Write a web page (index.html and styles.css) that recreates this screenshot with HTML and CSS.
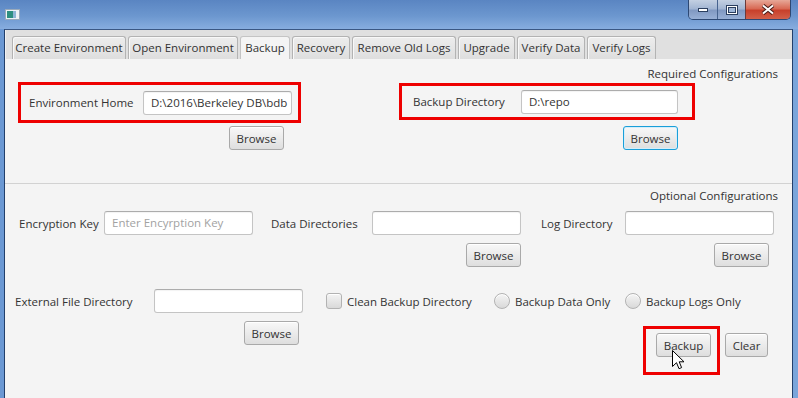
FILE: index.html
```html
<!DOCTYPE html>
<html lang="en">
<head>
  <meta charset="UTF-8" />
  <title>Backup</title>
  <link rel="stylesheet" href="styles.css">
</head>
<body>
  <div class="window">
    <!-- barra de titulo -->
    <div class="titlebar">
      <svg class="app-icon" width="15" height="11" viewBox="0 0 15 11">
        <rect x="0.5" y="0.5" width="14" height="10" fill="#eef2f6" stroke="#9aaabb" />
        <rect x="2" y="2" width="6" height="7" fill="#2e8f80" />
        <rect x="8" y="2" width="3" height="7" fill="#8fb6d6" />
      </svg>
      <div class="controls">
        <span class="ctl min">
          <svg width="12" height="6" viewBox="0 0 12 6"><rect x="1.5" y="1.5" width="9" height="3" fill="#fff" stroke="#2b3f5f" /></svg>
        </span>
        <span class="ctl max">
          <svg width="12" height="10" viewBox="0 0 12 10"><rect x="1.5" y="1.5" width="9" height="7" fill="none" stroke="#2b3f5f" stroke-width="3" /><rect x="1.5" y="1.5" width="9" height="7" fill="none" stroke="#fff" stroke-width="1" /><rect x="3" y="4" width="6" height="3" fill="#9fb7d9" /></svg>
        </span>
        <span class="ctl close">
          <svg width="14" height="11" viewBox="0 0 14 11"><path d="M2 1.5 L12 9.5 M12 1.5 L2 9.5" stroke="#4a1d18" stroke-width="4" /><path d="M2 1.5 L12 9.5 M12 1.5 L2 9.5" stroke="#fff" stroke-width="2" /></svg>
        </span>
      </div>
    </div>

    <div class="client">
      <div class="tabs">
        <div class="tab w-create">Create Environment</div>
        <div class="tab w-open">Open Environment</div>
        <div class="tab w-backup selected">Backup</div>
        <div class="tab w-recovery">Recovery</div>
        <div class="tab w-remove">Remove Old Logs</div>
        <div class="tab w-upgrade">Upgrade</div>
        <div class="tab w-vdata">Verify Data</div>
        <div class="tab w-vlogs">Verify Logs</div>
      </div>

      <div class="panel">
        <!-- configuracion obligatoria -->
        <section class="required">
          <div class="section-title">Required Configurations</div>
          <div class="req-row">
            <div class="mark mark-home">
              <span class="label w-home">Environment Home</span>
              <div class="field">D:\2016\Berkeley DB\bdb</div>
            </div>
            <div class="mark mark-backup">
              <span class="label w-bdir">Backup Directory</span>
              <div class="field field-wide">D:\repo</div>
            </div>
          </div>
          <div class="req-buttons">
            <button class="btn browse-home">Browse</button>
            <button class="btn focused browse-backup">Browse</button>
          </div>
        </section>

        <!-- configuracion opcional -->
        <section class="optional">
          <div class="section-title">Optional Configurations</div>
          <div class="opt-row">
            <span class="label w-enc">Encryption Key</span>
            <div class="field placeholder">Enter Encyrption Key</div>
            <span class="label w-data">Data Directories</span>
            <div class="field"></div>
            <span class="label w-log">Log Directory</span>
            <div class="field"></div>
          </div>
          <div class="opt-buttons">
            <button class="btn browse-data">Browse</button>
            <button class="btn browse-log">Browse</button>
          </div>
          <div class="ext-row">
            <span class="label w-ext">External File Directory</span>
            <div class="field"></div>
            <span class="choice w-clean"><span class="checkbox"></span>Clean Backup Directory</span>
            <span class="choice w-rdata"><span class="radio"></span>Backup Data Only</span>
            <span class="choice"><span class="radio"></span>Backup Logs Only</span>
          </div>
          <div class="action-row">
            <button class="btn browse-ext">Browse</button>
            <div class="mark mark-action">
              <button class="btn">Backup</button>
              <svg class="cursor" width="13" height="20" viewBox="0 0 13 20">
                <path d="M0.5 0.5 L0.5 16.5 L4.5 12.7 L7 18.7 L9.6 17.6 L7.2 11.8 L12 11.8 Z" fill="#fff" stroke="#000" stroke-width="1" stroke-linejoin="miter" />
              </svg>
            </div>
            <button class="btn clear">Clear</button>
          </div>
        </section>
      </div>
    </div>
  </div>
</body>
</html>
```

FILE: styles.css
```css
* {
  box-sizing: border-box;
}

body {
  margin: 0;
  font-family: "Open Sans", "Noto Sans", sans-serif;
  font-size: 11.5px;
  color: #333;
  background: #6d9bd5;
}

.window {
  width: 798px;
  height: 398px;
  display: flex;
  flex-direction: column;
  overflow: hidden;
  background: linear-gradient(to right, #6b98d3, #7aa5da);
}

.titlebar {
  flex: none;
  height: 29px;
  display: flex;
  justify-content: space-between;
  align-items: flex-start;
  background: linear-gradient(to bottom, #5a85c2, #6c97cf 55%, #87addf);
}

.app-icon {
  margin: 9px 0 0 5px;
}

.controls {
  display: flex;
  height: 20px;
  margin-right: 7px;
  border: 1px solid #2d4873;
  border-top: none;
  border-radius: 0 0 5px 5px;
  overflow: hidden;
}

.ctl {
  display: flex;
  align-items: center;
  justify-content: center;
  height: 100%;
}

.ctl.min {
  width: 28px;
  background: linear-gradient(to bottom, #c3d0e2, #a3b6d3 45%, #8199c2 55%, #98b0d6);
}

.ctl.max {
  width: 28px;
  border-left: 1px solid #46638f;
  background: linear-gradient(to bottom, #c3d0e2, #a3b6d3 45%, #8199c2 55%, #98b0d6);
}

.ctl.close {
  width: 45px;
  border-left: 1px solid #6b3a3a;
  background: linear-gradient(to bottom, #e7a898, #d86a55 45%, #c8402b 55%, #d2604a);
}

.client {
  flex: 1;
  display: flex;
  flex-direction: column;
  margin: 0 5px 0 4px;
  border-left: 1px solid #223f6b;
  border-right: 1px solid #223f6b;
  border-top: 1px solid #3a5784;
  background: #f4f4f4;
}

/* pestañas */
.tabs {
  flex: none;
  height: 29px;
  display: flex;
  align-items: flex-end;
  gap: 2px;
  padding-left: 6px;
  background: #e0e0e0;
  border-left: 1px solid #f2f2f2;
}

.tab {
  height: 23px;
  line-height: 21px;
  text-align: center;
  white-space: nowrap;
  border: 1px solid #b3b3b3;
  border-bottom: none;
  border-radius: 3px 3px 0 0;
  background: linear-gradient(to bottom, #ededed, #dedede);
  box-shadow: inset 1px 1px 0 #f8f8f8;
}

.tab.selected {
  background: #f4f4f4;
  border-color: #c4c4c4;
  box-shadow: none;
}

.w-create { width: 114px; }
.w-open { width: 110px; }
.w-backup { width: 50px; }
.w-recovery { width: 58px; }
.w-remove { width: 104px; }
.w-upgrade { width: 57px; }
.w-vdata { width: 68px; }
.w-vlogs { width: 69px; }

.panel {
  flex: 1;
}

.section-title {
  height: 16px;
  line-height: 16px;
  text-align: right;
  padding-right: 14px;
}

.required {
  height: 125px;
  padding-top: 7px;
  border-bottom: 1px solid #d2d2d2;
}

.req-row {
  display: flex;
  align-items: flex-start;
  padding-left: 13px;
}

.mark {
  border: 3px solid #ee0000;
}

.mark-home {
  width: 283px;
  height: 41px;
  display: flex;
  align-items: center;
  padding: 0 6px 0 8px;
}

.mark-backup {
  width: 296px;
  height: 37px;
  display: flex;
  align-items: center;
  padding: 0 14px 0 11px;
  margin: 1px 0 0 98px;
}

.label {
  flex: none;
  white-space: nowrap;
}

.w-home { width: 114px; }
.w-bdir { width: 108px; }

.field {
  flex: none;
  width: 149px;
  height: 24px;
  line-height: 22px;
  padding-left: 7px;
  white-space: nowrap;
  overflow: hidden;
  background: #fff;
  border: 1px solid #c4c4c4;
  border-top-color: #acacac;
  border-radius: 3px;
  box-shadow: inset 0 1px 1px rgba(0, 0, 0, 0.05);
}

.field-wide {
  width: 157px;
}

.field.placeholder {
  color: #a2a2a2;
}

.btn {
  flex: none;
  width: 55px;
  height: 24px;
  padding: 0;
  font: inherit;
  color: #333;
  border: 1px solid #a9a9a9;
  border-radius: 3px;
  background: linear-gradient(to bottom, #f8f8f8, #dedede);
  box-shadow: inset 0 1px 0 #fff;
}

.btn.focused {
  border-color: #1a9fd9;
  box-shadow: inset 0 0 0 1px #d4eefa;
}

.req-buttons {
  display: flex;
  margin-top: 3px;
}

.browse-home { margin-left: 224px; }
.browse-backup { margin-left: 339px; }

.optional {
  padding-top: 4px;
}

.opt-row {
  display: flex;
  align-items: center;
  margin-top: 7px;
  padding-left: 14px;
}

.w-enc { width: 85px; }
.w-data { width: 101px; margin-left: 18px; }
.w-log { width: 84px; margin-left: 20px; }

.opt-buttons {
  display: flex;
  margin-top: 8px;
}

.browse-data { margin-left: 461px; }
.browse-log { margin-left: 193px; }

.ext-row {
  display: flex;
  align-items: center;
  margin-top: 22px;
  padding-left: 10px;
}

.w-ext { width: 139px; }

.choice {
  display: flex;
  align-items: center;
  white-space: nowrap;
}

.w-clean { width: 168px; margin-left: 23px; }
.w-rdata { width: 131px; }

.checkbox,
.radio {
  width: 16px;
  height: 16px;
  margin-right: 5px;
  border: 1px solid #b2b2b2;
  background: linear-gradient(to bottom, #f4f4f4, #d9d9d9);
  box-shadow: inset 0 1px 0 #fff;
}

.checkbox {
  border-radius: 3px;
}

.radio {
  border-radius: 50%;
}

.action-row {
  display: flex;
  align-items: flex-start;
  margin-top: 8px;
}

.browse-ext { margin-left: 239px; }

.mark-action {
  position: relative;
  width: 77px;
  height: 49px;
  margin: 5px 0 0 344px;
  padding: 4px 0 0 10px;
}

.cursor {
  position: absolute;
  left: 26px;
  top: 21px;
}

.clear {
  width: 43px;
  margin: 12px 0 0 5px;
}
```
